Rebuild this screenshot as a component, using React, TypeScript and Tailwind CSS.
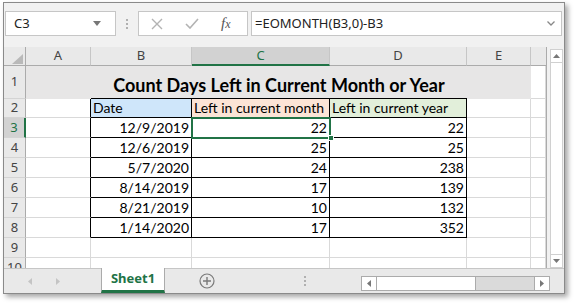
const GREEN = "#217346";

const dataRows: [string, string, string][] = [
  ["12/9/2019", "22", "22"],
  ["12/6/2019", "25", "25"],
  ["5/7/2020", "24", "238"],
  ["8/14/2019", "17", "139"],
  ["8/21/2019", "10", "132"],
  ["1/14/2020", "17", "352"],
];

function HeaderCell({ label, selected, last }: { label: string; selected?: boolean; last?: boolean }) {
  return (
    <div
      className={`flex items-center justify-center text-[13px] font-['Noto_Sans',sans-serif] ${
        last ? "" : "border-r border-[#c6c6c6]"
      } ${
        selected
          ? "bg-[#d2d2d2] border-b-2 border-b-[#217346] text-[#217346]"
          : "bg-[#e9e9e9] border-b border-b-[#ababab] text-[#444]"
      }`}
    >
      {label}
    </div>
  );
}

function RowHeader({ n, selected }: { n: number; selected?: boolean }) {
  return (
    <div
      className={`flex items-center justify-center text-[13px] font-['Noto_Sans',sans-serif] border-b border-[#d4d4d4] ${
        selected
          ? "bg-[#d2d2d2] border-r-2 border-r-[#217346] text-[#217346]"
          : "bg-[#e9e9e9] border-r border-r-[#ababab] text-[#444]"
      }`}
    >
      {n}
    </div>
  );
}

function GridCell({
  text,
  align = "left",
  bg = "bg-white",
  right = "border-r-[#d9d9d9]",
  bottom = "border-b-[#d9d9d9]",
}: {
  text?: string;
  align?: "left" | "right";
  bg?: string;
  right?: string;
  bottom?: string;
}) {
  return (
    <div
      className={`flex items-end border-r border-b ${right} ${bottom} ${bg} px-[2px] pb-[1px] text-[14px] leading-[17px] text-black font-['Lato',sans-serif] whitespace-nowrap ${
        align === "right" ? "justify-end" : "justify-start"
      }`}
    >
      {text}
    </div>
  );
}

function Sheet() {
  return (
    <div className="relative w-[543px] h-[221px] overflow-hidden border-r border-[#ababab]">
      <div className="grid grid-cols-[22px_65px_101px_138px_137px_64px_15px] grid-rows-[19px_33px_19px_repeat(8,20px)]">
        {/* column headers */}
        <div className="relative bg-[#e9e9e9] border-r border-b border-[#ababab]">
          <svg className="absolute right-[2px] bottom-[1px]" width="11" height="10" viewBox="0 0 11 10">
            <path d="M11 0 L11 10 L0 10 Z" fill="#b9b9b9" />
          </svg>
        </div>
        <HeaderCell label="A" />
        <HeaderCell label="B" />
        <HeaderCell label="C" selected />
        <HeaderCell label="D" />
        <HeaderCell label="E" />
        <HeaderCell label="" last />

        {/* row 1 */}
        <RowHeader n={1} />
        <div className="bg-[#e7e6e6]" />
        <div className="col-span-3 flex items-end justify-center bg-[#e7e6e6] border-b border-black pb-[2px] text-[18px] leading-[22px] font-bold font-['Lato',sans-serif] text-black whitespace-nowrap">
          Count Days Left in Current Month or Year
        </div>
        <div className="bg-[#e7e6e6]" />
        <GridCell />

        {/* row 2 */}
        <RowHeader n={2} />
        <GridCell right="border-r-black" />
        <GridCell text="Date" bg="bg-[#cfe6fa]" right="border-r-black" bottom="border-b-black" />
        <GridCell text="Left in current month" bg="bg-[#fce4d6]" right="border-r-black" bottom="border-b-black" />
        <GridCell text="Left in current year" bg="bg-[#e2efda]" right="border-r-black" bottom="border-b-black" />
        <GridCell />
        <GridCell />

        {dataRows.map((r, i) => (
          <div key={i} className="contents">
            <RowHeader n={i + 3} selected={i === 0} />
            <GridCell right="border-r-black" />
            <GridCell text={r[0]} align="right" right="border-r-black" bottom="border-b-black" />
            <GridCell text={r[1]} align="right" right="border-r-black" bottom="border-b-black" />
            <GridCell text={r[2]} align="right" right="border-r-black" bottom="border-b-black" />
            <GridCell />
            <GridCell />
          </div>
        ))}

        {[9, 10].map((n) => (
          <div key={n} className="contents">
            <RowHeader n={n} />
            <GridCell />
            <GridCell />
            <GridCell />
            <GridCell />
            <GridCell />
            <GridCell />
          </div>
        ))}
      </div>

      {/* active cell C3 */}
      <div className="absolute left-[187px] top-[70px] w-[140px] h-[22px] border-2 border-[#217346]" />
      <div className="absolute left-[324px] top-[88px] w-[6px] h-[6px] bg-[#217346] border border-white" />
    </div>
  );
}

function FormulaBar() {
  return (
    <div className="h-[44px] bg-[#f1f1f1] flex items-start pt-[8px] font-['Noto_Sans',sans-serif]">
      <div className="ml-[1px] w-[111px] h-[25px] bg-white border border-[#c6c6c6] flex items-center pl-[8px] pr-[14px] justify-between text-[13px] text-[#222]">
        <span>C3</span>
        <svg width="8" height="5" viewBox="0 0 8 5">
          <path d="M0 0 L8 0 L4 5 Z" fill="#777" />
        </svg>
      </div>
      <div className="w-[22px] h-[25px] flex flex-col items-center justify-center gap-[2px]">
        <span className="w-[2px] h-[2px] bg-[#b0b0b0]" />
        <span className="w-[2px] h-[2px] bg-[#b0b0b0]" />
        <span className="w-[2px] h-[2px] bg-[#b0b0b0]" />
      </div>
      <div className="w-[110px] h-[25px] bg-white border border-[#c6c6c6] flex items-center">
        <svg className="ml-[12px]" width="12" height="12" viewBox="0 0 12 12">
          <path d="M1 1 L11 11 M11 1 L1 11" stroke="#b3b3b3" strokeWidth="1.4" />
        </svg>
        <svg className="ml-[22px]" width="14" height="11" viewBox="0 0 14 11">
          <path d="M1 6 L5 10 L13 1" stroke="#b3b3b3" strokeWidth="1.6" fill="none" />
        </svg>
        <span className="ml-[22px] text-[15px] italic font-['Liberation_Serif',serif] text-[#555] leading-none">
          f<span className="text-[12px]">x</span>
        </span>
      </div>
      <div className="ml-[3px] w-[311px] h-[25px] bg-white border border-[#c6c6c6] flex items-center justify-between pl-[3px] pr-[6px] text-[13px] text-[#222]">
        <span>=EOMONTH(B3,0)-B3</span>
        <svg width="8" height="5" viewBox="0 0 8 5">
          <path d="M0.5 0.5 L4 4 L7.5 0.5" stroke="#888" strokeWidth="1.3" fill="none" />
        </svg>
      </div>
    </div>
  );
}

function VScroll() {
  return (
    <div className="ml-[3px] mt-[2px] w-[13px] h-[219px] flex flex-col bg-white border border-[#d0d0d0]">
      <div className="h-[13px] flex items-center justify-center border-b border-[#d0d0d0]">
        <svg width="7" height="4" viewBox="0 0 7 4">
          <path d="M0 4 L7 4 L3.5 0 Z" fill="#777" />
        </svg>
      </div>
      <div className="flex-1" />
      <div className="h-[13px] flex items-center justify-center border-t border-[#d0d0d0]">
        <svg width="7" height="4" viewBox="0 0 7 4">
          <path d="M0 0 L7 0 L3.5 4 Z" fill="#777" />
        </svg>
      </div>
    </div>
  );
}

function TabBar() {
  return (
    <div className="h-[25px] bg-[#e9e9e9] border-t border-[#c6c6c6] flex items-stretch font-['Noto_Sans',sans-serif]">
      <div className="w-[97px] flex items-center pl-[24px] gap-[24px]">
        <svg width="4" height="7" viewBox="0 0 4 7">
          <path d="M4 0 L4 7 L0 3.5 Z" fill="#c4c4c4" />
        </svg>
        <svg width="4" height="7" viewBox="0 0 4 7">
          <path d="M0 0 L0 7 L4 3.5 Z" fill="#c4c4c4" />
        </svg>
      </div>
      <div className="-mt-[1px] w-[64px] bg-white border-x border-[#ababab] border-b-[3px] border-b-[#217346] flex items-center justify-center text-[13px] font-bold text-[#217346]">
        Sheet1
      </div>
      <div className="w-[84px] flex items-center justify-center">
        <svg width="16" height="16" viewBox="0 0 16 16">
          <circle cx="8" cy="8" r="7" fill="none" stroke="#7a7a7a" strokeWidth="1.2" />
          <path d="M8 4 V12 M4 8 H12" stroke="#7a7a7a" strokeWidth="1.4" />
        </svg>
      </div>
      <div className="w-[112px] flex items-center justify-center">
        <div className="flex flex-col gap-[2px]">
          <span className="w-[2px] h-[2px] bg-[#b0b0b0]" />
          <span className="w-[2px] h-[2px] bg-[#b0b0b0]" />
          <span className="w-[2px] h-[2px] bg-[#b0b0b0]" />
        </div>
      </div>
      <div className="mt-[7px] h-[15px] w-[189px] flex border border-[#ababab] bg-[#dadada]">
        <div className="w-[15px] bg-white border-r border-[#ababab] flex items-center justify-center">
          <svg width="4" height="7" viewBox="0 0 4 7">
            <path d="M4 0 L4 7 L0 3.5 Z" fill="#777" />
          </svg>
        </div>
        <div className="w-[99px] bg-white border-r border-[#ababab]" />
        <div className="flex-1" />
        <div className="w-[15px] bg-white border-l border-[#ababab] flex items-center justify-center">
          <svg width="4" height="7" viewBox="0 0 4 7">
            <path d="M0 0 L0 7 L4 3.5 Z" fill="#777" />
          </svg>
        </div>
      </div>
    </div>
  );
}

export default function App() {
  return (
    <div className="w-[574px] h-[305px] bg-white pt-[2px] pl-[3px]">
      <div className="w-[562px] h-[292px] border border-[#8a8a8a] bg-[#f1f1f1] flex flex-col shadow-[3px_3px_5px_rgba(0,0,0,0.35)]">
        <FormulaBar />
        <div className="flex h-[221px]">
          <Sheet />
          <VScroll />
        </div>
        <TabBar />
      </div>
    </div>
  );
}
